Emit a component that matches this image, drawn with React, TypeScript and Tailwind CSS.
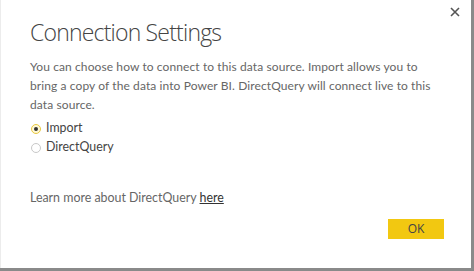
import React, { useState } from 'react';

const titleFont = { fontFamily: '"Open Sans", "Noto Sans", sans-serif' };
const bodyFont = { fontFamily: 'Lato, "Open Sans", sans-serif' };

function Radio({ checked, label, onSelect }: { checked: boolean; label: string; onSelect: () => void }) {
  return (
    <label className="flex items-center gap-[5px] cursor-pointer h-[19px]" onClick={onSelect}>
      <span
        className={
          checked
            ? 'w-[10px] h-[10px] rounded-full border border-[#e8c840] bg-[#fff8d6] flex items-center justify-center'
            : 'w-[10px] h-[10px] rounded-full border border-[#c8c8c8] bg-white'
        }
      >
        {checked && <span className="w-[4px] h-[4px] rounded-full bg-[#333]" />}
      </span>
      <span className="text-[12.4px] text-[#444]">{label}</span>
    </label>
  );
}

export default function App() {
  const [mode, setMode] = useState<'import' | 'direct'>('import');

  return (
    <div className="w-[474px] h-[271px] bg-[#8a8a8a] pr-[3px] pb-[3px]" style={bodyFont}>
      <div className="relative w-full h-full bg-white border-l border-[#ececec] flex flex-col pl-[29px] pr-[30px]">
        <button className="absolute right-[11px] top-[7px] text-[#555]">
          <svg width="10" height="10" viewBox="0 0 10 10">
            <path d="M1 1L9 9M9 1L1 9" stroke="#555" strokeWidth="1.6" />
          </svg>
        </button>

        <h1
          className="mt-[16px] text-[23px] font-light text-[#444] leading-[32px] tracking-[-0.8px]"
          style={titleFont}
        >
          Connection Settings
        </h1>

        <p className="mt-[9px] text-[12px] leading-[19px] text-[#666] tracking-[0.1px]">
          You can choose how to connect to this data source. Import allows you to bring a copy of the data into
          Power BI. DirectQuery will connect live to this data source.
        </p>

        <div className="mt-[5px] flex flex-col pl-[1px]">
          <Radio checked={mode === 'import'} label="Import" onSelect={() => setMode('import')} />
          <Radio checked={mode === 'direct'} label="DirectQuery" onSelect={() => setMode('direct')} />
        </div>

        <p className="mt-[31px] text-[12.4px] leading-[19px] text-[#666]">
          Learn more about DirectQuery{' '}
          <a className="underline text-[#333]" href="#">
            here
          </a>
        </p>

        <div className="flex justify-end mt-[12px]">
          <button
            className="w-[56px] h-[20px] bg-[#f2c811] text-[12px] text-[#444] leading-[20px] mr-[-3px]"
            style={titleFont}
          >
            OK
          </button>
        </div>
      </div>
    </div>
  );
}
